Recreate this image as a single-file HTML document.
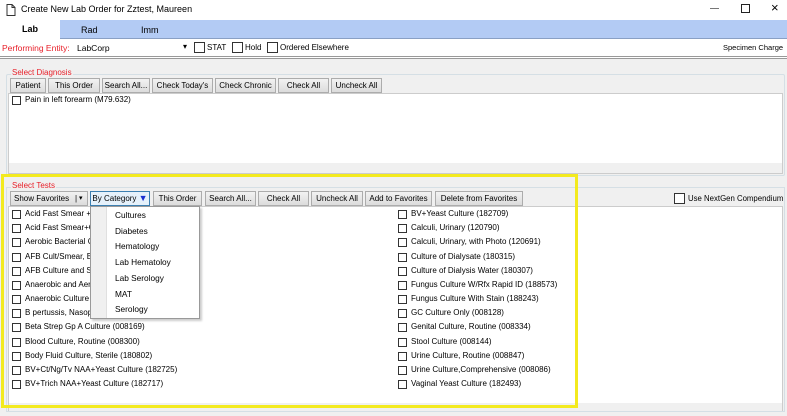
<!DOCTYPE html>
<html><head><style>
*{box-sizing:border-box}
body{margin:0;width:787px;height:416px;background:#f0f0f0;font-family:"Liberation Sans",sans-serif;font-size:8px;color:#000;position:relative;overflow:hidden}
.a{position:absolute;white-space:nowrap}
.btn{position:absolute;height:15px;top:0;background:linear-gradient(#f2f2f2,#dcdcdc);border:1px solid #acacac;text-align:center;line-height:13px;font-size:8px}
.cb{position:absolute;width:9px;height:9px;border:1px solid #333;background:#fff}
.red{color:#e8202a}
</style></head><body>
<div class="a" style="left:0;top:0;width:787px;height:20px;background:#fff"></div>
<svg class="a" style="left:6px;top:4px" width="10" height="12"><path d="M1 .5h5l3 3v8h-8z M6 .5v3h3" fill="#fff" stroke="#333"/></svg>
<div class="a" style="left:21px;top:4px;font-size:9px">Create New Lab Order for Zztest, Maureen</div>
<div class="a" style="left:710px;top:8px;width:9px;border-top:1px solid #777"></div>
<div class="a" style="left:741px;top:4px;width:9px;height:9px;border:1px solid #222"></div>
<div class="a" style="left:771px;top:0px;font-size:13px">×</div>
<div class="a" style="left:0;top:20px;width:787px;height:19px;background:#b3cbf4;border-bottom:1px solid #8aa0c4"></div>
<div class="a" style="left:0;top:20px;width:60px;height:19px;background:#fff;text-align:center;line-height:19px;font-weight:bold;font-size:9px">Lab</div>
<div class="a" style="left:81px;top:25px;font-size:9px">Rad</div>
<div class="a" style="left:141px;top:25px;font-size:9px">Imm</div>
<div class="a" style="left:0;top:39px;width:787px;height:20px;background:#fff;border-bottom:3px double #999"></div>
<div class="a red" style="left:2px;top:43px;font-size:8.5px">Performing Entity:</div>
<div class="a" style="left:77px;top:43px;font-size:8.5px">LabCorp</div>
<div class="a" style="left:183px;top:42px">▾</div>
<div class="cb" style="left:194px;top:42px;width:11px;height:11px"></div><div class="a" style="left:207px;top:43px">STAT</div>
<div class="cb" style="left:232px;top:42px;width:11px;height:11px"></div><div class="a" style="left:245px;top:43px">Hold</div>
<div class="cb" style="left:267px;top:42px;width:11px;height:11px"></div><div class="a" style="left:280px;top:43px">Ordered Elsewhere</div>
<div class="a" style="left:723px;top:43px;font-size:7.5px">Specimen Charge</div>
<div class="a" style="left:6px;top:74px;width:779px;height:102px;border:1px solid #d5dfe5;border-radius:2px"></div>
<div class="a red" style="left:11px;top:68px;background:#f0f0f0;padding:0 1px">Select Diagnosis</div>
<div class="a" style="left:10px;top:78px">
<div class="btn" style="left:0;width:36px">Patient</div><div class="btn" style="left:38px;width:52px">This Order</div><div class="btn" style="left:92px;width:48px">Search All...</div><div class="btn" style="left:142px;width:61px">Check Today's</div><div class="btn" style="left:205px;width:61px">Check Chronic</div><div class="btn" style="left:268px;width:51px">Check All</div><div class="btn" style="left:321px;width:51px">Uncheck All</div></div>
<div class="a" style="left:8px;top:93px;width:775px;height:81px;background:#fff;border:1px solid #ccc"></div>
<div class="a" style="left:9px;top:163px;width:773px;height:10px;background:#f0f0f0"></div>
<div class="cb" style="left:12px;top:96px"></div><div class="a" style="left:25px;top:95px">Pain in left forearm (M79.632)</div>
<div class="a" style="left:6px;top:187px;width:779px;height:225px;border:1px solid #d5dfe5"></div>
<div class="a red" style="left:11px;top:181px;background:#f0f0f0;padding:0 1px">Select Tests</div>
<div class="a" style="left:10px;top:191px">
<div class="btn" style="left:0;width:78px;text-align:left;padding-left:3px">Show Favorites<span style="position:absolute;left:64px;top:0">|</span><span style="position:absolute;left:68px;top:0;font-size:7px">▾</span></div>
<div class="btn" style="left:80px;width:60px;border-color:#3c7fb1;background:#e5f1fb">By Category <span style="color:#1a2fd0;font-size:9px">▼</span></div>
<div class="btn" style="left:143px;width:49px">This Order</div><div class="btn" style="left:195px;width:51px">Search All...</div><div class="btn" style="left:248px;width:51px">Check All</div><div class="btn" style="left:301px;width:52px">Uncheck All</div><div class="btn" style="left:355px;width:67px">Add to Favorites</div><div class="btn" style="left:425px;width:88px">Delete from Favorites</div></div>
<div class="cb" style="left:674px;top:193px;width:11px;height:11px"></div><div class="a" style="left:688px;top:194px;font-size:7.8px">Use NextGen Compendium</div>
<div class="a" style="left:8px;top:206px;width:775px;height:205px;background:#fff;border:1px solid #ccc"></div>
<div class="a" style="left:9px;top:403px;width:773px;height:8px;background:#f0f0f0"></div>
<div id="L"></div>
<div class="a" style="left:90px;top:206px;width:110px;height:113px;background:#fff;border:1px solid #999;box-shadow:2px 2px 2px rgba(0,0,0,.2)"><div style="position:absolute;left:0;top:0;width:16px;height:111px;background:#f0f0f0;border-right:1px solid #e0e0e0"></div>
<div class="a" style="left:24px;top:1px;line-height:15.7px;font-size:8.3px">Cultures<br>Diabetes<br>Hematology<br>Lab Hematoloy<br>Lab Serology<br>MAT<br>Serology</div></div>
<div class="a" style="left:1px;top:174px;width:577px;height:234px;border:3px solid #f3ea1f"></div>
<script>
var l=["Acid Fast Smear + ","Acid Fast Smear+C","Aerobic Bacterial C","AFB Cult/Smear, B","AFB Culture and S","Anaerobic and Aer","Anaerobic Culture","B pertussis, Nasop","Beta Strep Gp A Culture (008169)","Blood Culture, Routine (008300)","Body Fluid Culture, Sterile (180802)","BV+Ct/Ng/Tv NAA+Yeast Culture (182725)","BV+Trich NAA+Yeast Culture (182717)"];
var r=["BV+Yeast Culture (182709)","Calculi, Urinary (120790)","Calculi, Urinary, with Photo (120691)","Culture of Dialysate (180315)","Culture of Dialysis Water (180307)","Fungus Culture W/Rfx Rapid ID (188573)","Fungus Culture With Stain (188243)","GC Culture Only (008128)","Genital Culture, Routine (008334)","Stool Culture (008144)","Urine Culture, Routine (008847)","Urine Culture,Comprehensive (008086)","Vaginal Yeast Culture (182493)"];
var h="";for(var i=0;i<13;i++){var y=209+i*14.17;
h+='<div class="cb" style="left:12px;top:'+(y+1)+'px"></div><div class="a" style="left:25px;top:'+y+'px">'+l[i]+'</div>';
h+='<div class="cb" style="left:398px;top:'+(y+1)+'px"></div><div class="a" style="left:411px;top:'+y+'px">'+r[i]+'</div>';}
document.getElementById("L").innerHTML=h;
</script>
</body></html>
